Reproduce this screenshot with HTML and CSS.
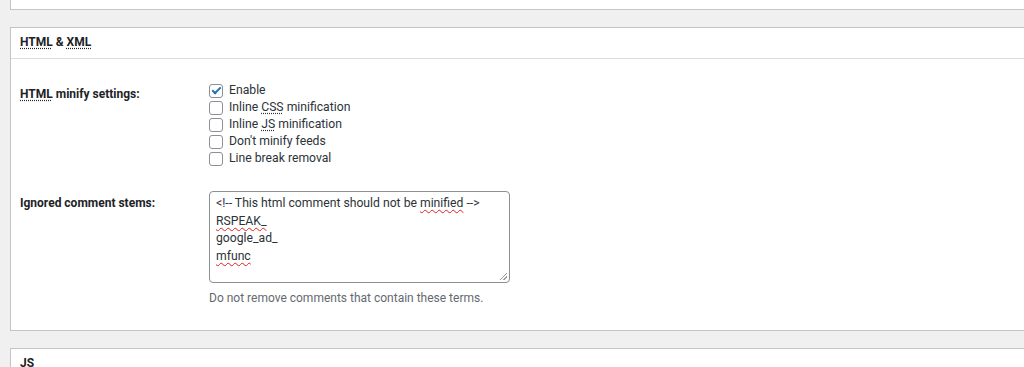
FILE: index.html
```html
<!DOCTYPE html>
<html lang="en">

<head>
    <meta charset="UTF-8">
    <meta name="viewport" content="width=device-width, initial-scale=1.0">
    <title>HTML &amp; XML settings</title>
    <link rel="stylesheet" href="styles.css">
</head>

<body>
    <!-- previous section, mostly scrolled out of view -->
    <div class="postbox postbox-cut"></div>

    <div class="postbox">
        <h3 class="postbox-header"><abbr>HTML</abbr> &amp; <abbr>XML</abbr></h3>
        <div class="inside">
            <div class="form-row first">
                <div class="form-label"><abbr>HTML</abbr> minify settings:</div>
                <div class="form-field">
                    <label class="check-row"><span class="checkbox checked"></span><span>Enable</span></label>
                    <label class="check-row"><span class="checkbox"></span><span>Inline <abbr>CSS</abbr> minification</span></label>
                    <label class="check-row"><span class="checkbox"></span><span>Inline <abbr>JS</abbr> minification</span></label>
                    <label class="check-row"><span class="checkbox"></span><span>Don't minify feeds</span></label>
                    <label class="check-row"><span class="checkbox"></span><span>Line break removal</span></label>
                </div>
            </div>

            <div class="form-row second">
                <div class="form-label label-stems">Ignored comment stems:</div>
                <div class="form-field">
                    <div class="textarea" role="textbox">&lt;!-- This html comment should not be <span class="typo">minified</span> --&gt;<br><span class="typo">RSPEAK_</span><br>google_ad_<br><span class="typo">mfunc</span><span class="grip"></span></div>
                    <p class="description">Do not remove comments that contain these terms.</p>
                </div>
            </div>
        </div>
    </div>

    <div class="postbox">
        <h3 class="postbox-header"><abbr>JS</abbr></h3>
    </div>
</body>

</html>
```

FILE: styles.css
```css
body {
    margin: 0;
    padding: 0 0 0 10px;
    background-color: #f0f0f1;
    font-family: Roboto, "Liberation Sans", Arial, sans-serif;
    font-size: 12px;
    color: #2c3338;
    overflow: hidden;
}

abbr {
    text-decoration: underline dotted;
    text-underline-offset: 2px;
}

/* 面板 */
.postbox {
    background-color: #fff;
    border: 1px solid #c3c4c7;
    border-right: none;
    margin-bottom: 17px;
}

.postbox-cut {
    height: 9px;
    border-top: none;
}

.postbox-header {
    margin: 0;
    padding: 7px 9px 9px;
    font-size: 12px;
    line-height: 14px;
    font-weight: bold;
    color: #1d2327;
    border-bottom: 1px solid #dcdcde;
}

.inside {
    padding: 0 9px 23px;
}

/* 表单行 */
.form-row {
    display: grid;
    grid-template-columns: 189px 1fr;
}

.form-row.first {
    padding-top: 23px;
}

.form-row.second {
    padding-top: 24px;
}

.form-label {
    font-weight: bold;
    color: #1d2327;
    line-height: 17px;
    padding-top: 4px;
}

.label-stems {
    padding-top: 4px;
}

.check-row {
    display: flex;
    align-items: center;
    height: 17px;
    line-height: 17px;
    font-size: 12.2px;
}

.checkbox {
    width: 12px;
    height: 12px;
    border: 1px solid #8c8f94;
    border-radius: 3px;
    margin-right: 6px;
    position: relative;
    flex-shrink: 0;
}

.checkbox.checked::after {
    content: "";
    position: absolute;
    left: 4px;
    top: 0;
    width: 3px;
    height: 7px;
    border: solid #2271b1;
    border-width: 0 2px 2px 0;
    transform: rotate(45deg);
}

/* 文本框 */
.textarea {
    width: 287px;
    height: 85px;
    padding: 3px 6px 2px;
    border: 1px solid #8c8f94;
    border-radius: 4px;
    font-size: 12.2px;
    line-height: 17.5px;
    color: #2c3338;
    position: relative;
}

.typo {
    text-decoration: underline wavy #e02020;
    text-decoration-thickness: 1px;
    text-underline-offset: 2px;
}

.grip {
    position: absolute;
    right: 2px;
    bottom: 2px;
    width: 7px;
    height: 7px;
    background: linear-gradient(135deg, transparent 45%, #9a9a9a 45%, #9a9a9a 55%, transparent 55%, transparent 70%, #9a9a9a 70%, #9a9a9a 80%, transparent 80%);
}

.description {
    margin: 7px 0 0;
    color: #646970;
    line-height: 17px;
}
```
